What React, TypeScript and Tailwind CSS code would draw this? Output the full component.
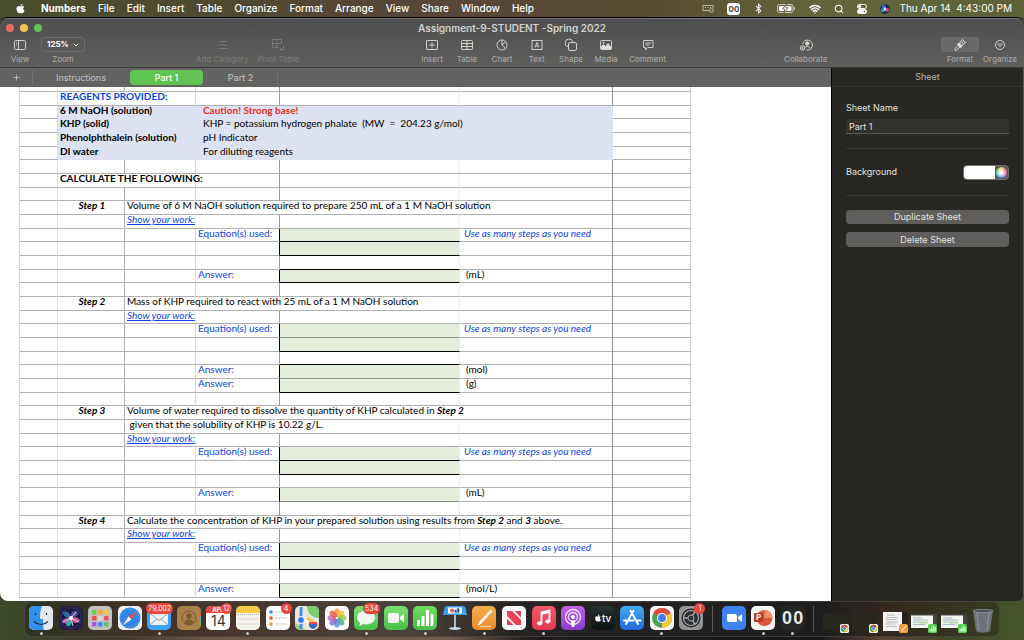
import { useState, type ReactNode } from 'react';
import { FaApple, FaBluetoothB } from 'react-icons/fa';
import { ChevronDown, Plus, Search, Wifi } from 'lucide-react';

/* ---------- Sheet data ---------- */

type Cell = {
  span?: number;
  text?: ReactNode;
  className?: string;
};

// right-hand grid line of each column
const edges = [
  'border-r-[#e0e0e0]',
  'border-r-[#b0b0b0]',
  'border-r-[#d8d8d8]',
  'border-r-[#9a9a9a]',
  'border-r-[#ececec]',
  'border-r-[#929292]',
  'border-r-[#cccccc]',
];

const green = 'bg-[#e4eddc]';
const blue = 'text-[#0b45e6]';

const blank: Cell[] = [{}, {}, {}, {}, {}, {}, {}];

const reagent = (name: string, note: string, noteClass = ''): Cell[] => [
  {},
  { span: 2, text: name, className: 'bg-[#dce2f1] border-[#dce2f1]! font-bold' },
  { span: 3, text: note, className: `bg-[#dce2f1] border-[#dce2f1]! pl-[7px]! ${noteClass}` },
  {},
];

const heading = (text: string, className = ''): Cell[] => [
  {},
  { span: 2, text, className: `font-bold ${className}` },
  {},
  {},
  {},
  {},
];

const step = (label: string, text: ReactNode, wide = true): Cell[] => [
  {},
  { text: label, className: 'text-center font-bold italic' },
  { span: wide ? 4 : 3, text },
  ...(wide ? [] : [{}]),
  {},
];

const work: Cell[] = [
  {},
  {},
  { span: 2, text: 'Show your work:', className: `italic underline ${blue}` },
  {},
  {},
  {},
];

const entry = (label: string, line: string, after = '', afterClass = 'pl-[6px]!'): Cell[] => [
  {},
  {},
  {},
  { text: label, className: `border-r-black! ${blue}` },
  { className: `${green} ${line}` },
  { text: after, className: afterClass },
  {},
];

const dark = 'border-b-black!';
const soft = 'border-b-[#8c918a]!';
const hint = 'Use as many steps as you need';
const hintClass = `pl-[4px]! italic ${blue}`;

// the blank row above a box carries its top line
const capped: Cell[] = [{}, {}, {}, {}, { className: dark }, {}, {}];

const rows: Cell[][] = [
  blank,
  heading('REAGENTS PROVIDED:', blue),
  reagent('6 M NaOH (solution)', 'Caution! Strong base!', 'font-bold text-[#ee2a24]'),
  reagent('KHP (solid)', 'KHP = potassium hydrogen phalate  (MW  =  204.23 g/mol)'),
  reagent('Phenolphthalein (solution)', 'pH Indicator'),
  reagent('DI water', 'For diluting reagents'),
  blank,
  heading('CALCULATE THE FOLLOWING:'),
  blank,
  step('Step 1', 'Volume of 6 M NaOH solution required to prepare 250 mL of a 1 M NaOH solution'),
  work,
  entry('Equation(s) used:', dark, hint, hintClass),
  entry('', dark),
  capped,
  entry('Answer:', dark, '(mL)'),
  blank,
  step('Step 2', 'Mass of KHP required to react with 25 mL of a 1 M NaOH solution', false),
  work,
  entry('Equation(s) used:', soft, hint, hintClass),
  entry('', dark),
  capped,
  entry('Answer:', soft, '(mol)'),
  entry('Answer:', dark, '(g)'),
  blank,
  step(
    'Step 3',
    <>
      Volume of water required to dissolve the quantity of KHP calculated in{' '}
      <b className="italic">Step 2</b>
    </>,
  ),
  step('', ' given that the solubility of KHP is 10.22 g/L.', false),
  work,
  entry('Equation(s) used:', dark, hint, hintClass),
  entry('', dark),
  blank,
  entry('Answer:', soft, '(mL)'),
  blank,
  step(
    'Step 4',
    <>
      Calculate the concentration of KHP in your prepared solution using results from{' '}
      <b className="italic">Step 2</b> and <b className="italic">3</b> above.
    </>,
  ),
  work,
  entry('Equation(s) used:', dark, hint, hintClass),
  entry('', dark),
  blank,
  entry('Answer:', dark, '(mol/L)'),
];

function SheetRow({ cells }: { cells: Cell[] }) {
  let col = -1;
  return (
    <tr className="h-[14px] nth-[3n]:h-[13px] first:h-[5px]">
      {cells.map((cell, i) => {
        col += cell.span ?? 1;
        return (
          <td
            key={i}
            colSpan={cell.span ?? 1}
            className={`border-r border-b border-b-[#b0b0b0] p-0 pl-[2px] align-top whitespace-pre ${edges[col]} ${cell.className ?? ''}`}
          >
            {cell.text}
          </td>
        );
      })}
    </tr>
  );
}

/* ---------- Menu bar ---------- */

const menus = ['File', 'Edit', 'Insert', 'Table', 'Organize', 'Format', 'Arrange', 'View', 'Share', 'Window', 'Help'];

function MenuBar() {
  return (
    <nav className="flex h-[17px] items-center justify-between bg-[linear-gradient(90deg,#484e2c,#4f4a30_22%,#594638_45%,#57492f_62%,#63663d_80%,#5c6138)] pr-3 pl-[15px] text-[10px] font-medium text-white">
      <div className="flex items-center gap-3">
        <FaApple className="mr-[3px] size-[11px]" />
        <button className="font-bold">Numbers</button>
        {menus.map((m) => (
          <button key={m}>{m}</button>
        ))}
      </div>
      <div className="flex items-center gap-[13px]">
        <svg viewBox="0 0 12 9" className="h-[9px] w-3" fill="none" stroke="#b8b9a6">
          <path d="M8 6.500H1v-5h10v3M3 3.500h1M5.500 3.500h1M8 3.500h1" />
          <circle cx="9.500" cy="6.500" r="1.800" />
        </svg>
        <span className="flex h-3 w-[13px] items-center justify-center rounded-[3px] bg-white text-[8px] leading-3 font-bold text-[#4a4a38]">00</span>
        <FaBluetoothB className="size-[11px]" />
        <svg viewBox="0 0 19 9" className="h-[9px] w-[19px]" fill="none">
          <rect x=".5" y=".5" width="15.500" height="8" rx="2" stroke="#cfd0c4" />
          <rect x="2" y="2" width="12.500" height="5" rx="1" fill="#fff" />
          <path d="M9.500 0 5.500 5h2.300L7 9l4-5.200H8.700z" fill="#fff" stroke="#5c5e3c" strokeWidth=".8" />
          <path d="M17.500 3v3" stroke="#cfd0c4" />
        </svg>
        <Wifi className="size-3" strokeWidth={3} />
        <Search className="size-[10px]" strokeWidth={2.5} />
        <svg viewBox="0 0 10 10" className="size-[10px]" fill="none" stroke="#fff">
          <rect x=".5" y=".5" width="9" height="4" rx="2" />
          <rect x=".5" y="5.500" width="9" height="4" rx="2" fill="#fff" />
          <circle cx="2.500" cy="2.500" r="1.200" fill="#fff" />
          <circle cx="7.500" cy="7.500" r=".8" fill="#55583a" stroke="none" />
        </svg>
        <SiriOrb className="size-[10px]" />
        <time className="-ml-1 font-normal whitespace-pre">Thu Apr 14  4:43:00 PM</time>
      </div>
    </nav>
  );
}

function SiriOrb({ className }: { className: string }) {
  return (
    <svg viewBox="0 0 24 24" className={className}>
      <circle cx="12" cy="12" r="11.500" fill="#1c2150" />
      <circle cx="9" cy="7" r="5" fill="#4b7ee8" opacity=".8" />
      <circle cx="17" cy="14" r="5" fill="#ea4f93" opacity=".8" />
      <circle cx="7" cy="15" r="5" fill="#3fb6d0" opacity=".8" />
      <path d="m12 6 4 11-4-3-4 3z" fill="#fff" />
    </svg>
  );
}

/* ---------- Toolbar ---------- */

const glyphs: Record<string, ReactNode> = {
  View: (
    <>
      <rect x="1.500" y="2.500" width="11" height="9" rx="1" />
      <path d="M5.500 2.500v9M3 5h1M3 7h1" />
    </>
  ),
  'Add Category': <path d="M2 3.500h1M5 3.500h7M2 7h1M5 7h7M2 10.500h1M5 10.500h7" />,
  'Pivot Table': (
    <>
      <path d="M8 9.500H1.500v-8h9V6M6 1.500v8M1.500 5.500h9" />
      <path d="M12.500 8v3.500H9M10.500 10 9 11.500l1.500 1.500" />
    </>
  ),
  Insert: (
    <>
      <rect x="1.500" y="2.500" width="11" height="9" rx=".5" />
      <path d="M7 4.500v5M4.500 7h5" />
    </>
  ),
  Table: (
    <>
      <rect x="1.500" y="2.500" width="11" height="9" rx="1" />
      <path d="M1.500 5.500h11M1.500 8.500h11M7 2.500v9" />
    </>
  ),
  Chart: (
    <>
      <circle cx="7" cy="7" r="5" />
      <path d="M7 2v5l3.500 3.500M7 7l3.500-3" />
    </>
  ),
  Text: (
    <>
      <rect x="2" y="2.500" width="10" height="9" />
      <path d="m5 9.500 2-5 2 5M5.800 8h2.400" />
    </>
  ),
  Shape: (
    <>
      <path d="M4.500 9A4 4 0 1 1 9 4" />
      <rect x="4.500" y="4.500" width="8" height="8" rx="1.500" />
    </>
  ),
  Media: (
    <>
      <rect x="1.500" y="2.500" width="11" height="9" rx="1" />
      <path d="M2 11V9l2.500-2.500 2 2L9 5.500 12 9v2z" fill="currentColor" />
      <circle cx="4.500" cy="4.800" r=".6" fill="currentColor" />
    </>
  ),
  Comment: (
    <>
      <path d="M2.500 2.500h9.500v7H6.500L4.500 12V9.500h-2z" />
      <path d="M4.500 5h5.500M4.500 7h4" />
    </>
  ),
  Collaborate: (
    <>
      <path d="M3.500 6a5 5 0 1 1 4 6" />
      <circle cx="8.200" cy="5.500" r="1.700" fill="currentColor" />
      <path d="M5.500 10c1-2 4.500-2 5.500 0" />
      <circle cx="3.500" cy="10" r="2.300" />
      <path d="M3.500 9v2M2.500 10h2" />
    </>
  ),
  Format: (
    <>
      <path d="m6.500 5 3-3.500 3 3L9 7.500z" />
      <path d="m8 3.300 2.700 2.700M10 3.500l.8.800M5.500 5l3.500 3.500-1.500 1L4.500 6.500z" fill="currentColor" />
      <path d="M5.200 7.200 2 10.800c-.6.900.4 2 1.300 1.300L7 9" />
    </>
  ),
  Organize: (
    <>
      <circle cx="7" cy="7" r="4.500" />
      <path d="M4.500 6h5M5.500 8h3" />
    </>
  ),
};

function Tool({ name, className, active, disabled }: { name: string; className: string; active?: boolean; disabled?: boolean }) {
  return (
    <button
      disabled={disabled}
      className={`flex flex-col items-center gap-[2px] text-[#adadab] disabled:text-[#7c7c7a] ${className}`}
    >
      <span className={`flex h-[15px] w-[38px] items-center justify-center rounded-xs ${active ? 'bg-[#696967] text-[#e4e4e2]' : ''} ${disabled ? '' : 'text-[#dcdcda]'}`}>
        <svg viewBox="0 0 14 14" className="size-[14px]" fill="none" stroke="currentColor" strokeWidth=".9">
          {glyphs[name]}
        </svg>
      </span>
      <span className="text-[8px] leading-[11px] whitespace-nowrap">{name}</span>
    </button>
  );
}

function Toolbar() {
  return (
    <header className="border-b border-[#3b3b39] bg-linear-to-b from-[#4e4e4c] to-[#5f5f5d]">
      <div className="grid h-[18px] grid-cols-[1fr_auto_1fr] items-center border-t border-[#727270]">
        <div className="flex gap-[6px] pl-[6px]">
          <button aria-label="Close" className="size-2 rounded-full bg-[#ec6a5e]" />
          <button aria-label="Minimize" className="size-2 rounded-full bg-[#f4bf4e]" />
          <button aria-label="Zoom window" className="size-2 rounded-full bg-[#61c454]" />
        </div>
        <h1 className="text-[10px] leading-3 font-semibold text-[#d2d2d0]">Assignment-9-STUDENT -Spring 2022</h1>
      </div>
      <div className="flex h-[31px] justify-between pt-px pr-1">
        <div className="flex">
          <Tool name="View" className="w-10" />
          <label className="flex w-[46px] flex-col items-center gap-[2px] text-[8px] leading-[11px] text-[#adadab]">
            <span className="relative flex h-[15px] w-11 items-center rounded-sm border border-[#6c6c6a] text-white">
              <select className="w-full appearance-none pl-[5px] text-[8px] leading-[11px] font-bold outline-none">
                <option>125%</option>
              </select>
              <ChevronDown className="pointer-events-none absolute right-1 size-2" strokeWidth={3} />
            </span>
            Zoom
          </label>
        </div>
        <div className="flex w-28">
          <Tool name="Add Category" className="w-[58px]" disabled />
          <Tool name="Pivot Table" className="w-[58px]" disabled />
        </div>
        <div className="flex">
          <Tool name="Insert" className="w-[35px]" />
          <Tool name="Table" className="w-[35px]" />
          <Tool name="Chart" className="w-[35px]" />
          <Tool name="Text" className="w-[34px]" />
          <Tool name="Shape" className="w-[35px]" />
          <Tool name="Media" className="w-[35px]" />
          <Tool name="Comment" className="w-12" />
        </div>
        <Tool name="Collaborate" className="w-[52px]" />
        <div className="flex">
          <Tool name="Format" className="w-10" active />
          <Tool name="Organize" className="w-10" />
        </div>
      </div>
    </header>
  );
}

/* ---------- Sheets ---------- */

const tabs = ['Instructions', 'Part 1', 'Part 2'];

function SheetTabs() {
  const [current, setCurrent] = useState('Part 1');
  return (
    <div className="flex h-[19px] items-center bg-[#636361] text-[9px] text-[#c4c4c2]">
      <button aria-label="New sheet" className="flex w-8 justify-center">
        <Plus className="size-[9px]" />
      </button>
      <div className="flex h-[15px] items-center gap-px border-x border-[#717170]">
        {tabs.map((tab) => (
          <button
            key={tab}
            onClick={() => setCurrent(tab)}
            className={`h-[15px] rounded-sm leading-[15px] ${tab === 'Instructions' ? 'w-24' : 'w-[73px]'} ${tab === current ? 'bg-[#62c355] font-medium text-white' : ''}`}
          >
            {tab}
          </button>
        ))}
      </div>
    </div>
  );
}

function Inspector() {
  const [name, setName] = useState('Part 1');
  return (
    <aside className="w-[193px] border-r border-l border-r-[#5a5956] border-l-black bg-[#282724] text-[9px] text-[#e3e2df]">
      <h2 className="h-[19px] border-b border-[#33322f] text-center leading-[18px] text-[#b4b3b0]">Sheet</h2>
      <div className="px-[14px] pt-[15px]">
        <label className="block">
          <span className="block leading-3">Sheet Name</span>
          <input
            value={name}
            onChange={(e) => setName(e.target.value)}
            className="mt-[5px] block h-[15px] w-full border-b border-[#5b5a57] bg-[#32312e] px-[3px] outline-none"
          />
        </label>
        <div className="mt-[14px] flex h-[48px] items-center justify-between border-y border-[#3a3936]">
          <span>Background</span>
          <button aria-label="Background colour" className="flex h-[15px] w-[46px] items-center justify-end rounded-sm border border-[#73726f] bg-[linear-gradient(90deg,#ffffff_31px,#5c5b58_31px)] pr-px">
            <span className="size-[11px] rounded-full bg-[radial-gradient(circle,#ffffff_15%,transparent_70%),conic-gradient(#f2c14e,#e2574c,#c85be0,#4d7df2,#45d3d8,#67cf5c,#f2c14e)]" />
          </button>
        </div>
        <div className="mt-[14px] flex flex-col gap-2 text-center">
          <button className="h-[14px] rounded-sm bg-[#5f5e5c] leading-[14px]">Duplicate Sheet</button>
          <button className="h-[15px] rounded-sm bg-[#5f5e5c] leading-[15px]">Delete Sheet</button>
        </div>
      </div>
    </aside>
  );
}

/* ---------- Dock ---------- */

type App = { name: string; bg: string; art?: ReactNode; running?: boolean; badge?: string };

const apps: App[] = [
  {
    name: 'Finder', bg: 'bg-[#e3e8ee]', running: true,
    art: (
      <>
        <path d="M5 0h8c-2 5-2 8-2 13h3c0 4 0 8 1 11H5a5 5 0 0 1-5-5V5a5 5 0 0 1 5-5z" fill="#3391ec" />
        <path d="M6.500 7v2M17.500 7v2M5 15.500c4 4 10 4 14 0" stroke="#1b2d44" fill="none" strokeWidth="1.200" />
      </>
    ),
  },
  {
    name: 'Siri', bg: 'bg-[#23204a]',
    art: (
      <>
        <circle cx="12" cy="12" r="10" fill="#15183a" stroke="#4a4a80" strokeWidth=".5" />
        <path d="M12 12C7 12 3 9 4 6c4-2 8 2 8 6" fill="#3f8fd0" opacity=".7" />
        <path d="M12 12c-1-5 2-9 6-7 3 3-1 7-6 7" fill="#6f6ad8" opacity=".6" />
        <path d="M12 12c5-2 9 0 9 3-4 4-8 2-9-3" fill="#e4539a" opacity=".9" />
        <path d="M12 12c2 5 0 9-4 8-3-3-1-7 4-8" fill="#41cfc0" opacity=".8" />
        <path d="M12 12c-5-1-9 1-9 4 3 3 8 1 9-4" fill="#d560b8" opacity=".7" />
        <path d="m4 16 8-4 5-6M12 12l2 8M12 12l8 4" stroke="#dfe9fb" strokeWidth=".9" fill="none" />
        <circle cx="12" cy="12" r="2" fill="#fff" />
      </>
    ),
  },
  {
    name: 'Launchpad', bg: 'bg-[#c3c1be]',
    art: (
      <>
        {['#62cf55', '#f6a63b', '#f4c443', '#e9554d', '#d9d9dc', '#e9506a', '#a455dc', '#4b8bf0', '#55c46b'].map((c, i) => (
          <rect key={c} x={4 + (i % 3) * 6} y={4 + Math.floor(i / 3) * 6} width="4.500" height="4.500" rx="1" fill={c} />
        ))}
      </>
    ),
  },
  {
    name: 'Safari', bg: 'bg-[#eeeff1]',
    art: (
      <>
        <circle cx="12" cy="12" r="10.500" fill="#3186e4" />
        <circle cx="12" cy="12" r="9" fill="none" stroke="#8fc5f7" strokeDasharray=".6 1.300" />
        <path d="m19 5-5.500 8.500-3-3z" fill="#ef4a3c" />
        <path d="m5 19 5.500-8.500 3 3z" fill="#fff" />
      </>
    ),
  },
  {
    name: 'Mail', bg: 'bg-[#3ea1f3]', running: true, badge: '79,002',
    art: (
      <>
        <rect x="3" y="7" width="18" height="12" rx="1.500" fill="#eef1f4" />
        <path d="m3.500 8 8.500 6.500L20.500 8M3.500 18.500 10 13M20.500 18.500 14 13" stroke="#9aa6b2" fill="none" />
      </>
    ),
  },
  {
    name: 'Contacts', bg: 'bg-[#a9824a]',
    art: (
      <>
        <path d="M23.500 7v3" stroke="#e05a46" strokeWidth="1.500" />
        <path d="M23.500 11v3" stroke="#4db9e6" strokeWidth="1.500" />
        <path d="M23.500 15v4" stroke="#68c35c" strokeWidth="1.500" />
        <circle cx="12" cy="12" r="7" fill="none" stroke="#7b5a2e" />
        <circle cx="12" cy="10" r="2.800" fill="#7b5a2e" />
        <path d="M7 16.500c2-4 8-4 10 0-3 3-7 3-10 0" fill="#7b5a2e" />
      </>
    ),
  },
  { name: 'Calendar', bg: 'bg-white', badge: '12' },
  {
    name: 'Notes', bg: 'bg-[#f5f3ee]', running: true,
    art: (
      <>
        <path d="M0 7V5a5 5 0 0 1 5-5h14a5 5 0 0 1 5 5v2z" fill="#f7cb45" />
        <path d="M0 8.500h24" stroke="#b3aea4" strokeDasharray="1 1" />
        <path d="M2 13h20M2 18h20" stroke="#d9d6cf" />
      </>
    ),
  },
  {
    name: 'Reminders', bg: 'bg-white', badge: '4',
    art: (
      <>
        <circle cx="5" cy="6" r="1.800" fill="#3c86ee" />
        <circle cx="5" cy="12" r="1.800" fill="#e6503f" />
        <circle cx="5" cy="18" r="1.800" fill="#ee9a3c" />
        <path d="M9 6h8M9 12h12M9 18h12" stroke="#c9c9cb" />
      </>
    ),
  },
  {
    name: 'Maps', bg: 'bg-[#e9e6da]',
    art: (
      <>
        <path d="M12 0h7a5 5 0 0 1 5 5v7C17 12 12 7 12 0z" fill="#79cf6a" />
        <path d="M5 0C5 12 12 19 24 19" stroke="#fff" strokeWidth="3" fill="none" />
        <path d="M0 17v2a5 5 0 0 0 5 5h6z" fill="#8fd67c" />
        <path d="M12 12 24 20" stroke="#f4c74a" strokeWidth="3" />
        <path d="M6 1v22" stroke="#3d8bf0" strokeWidth="3" />
        <circle cx="6" cy="14" r="3.500" fill="#2f7df0" stroke="#fff" />
        <path d="M14 16h8v3c0 3-4 4-4 4s-4-1-4-4z" fill="#3a66c4" />
        <path d="M14 16h8v2h-8z" fill="#e24a42" />
      </>
    ),
  },
  {
    name: 'Photos', bg: 'bg-[#fafafa]',
    art: (
      <>
        {['#f39b35', '#f2c63d', '#9fcb4c', '#55b58b', '#5599d8', '#7c74cc', '#c66fb2', '#e8604f'].map((c, i) => (
          <ellipse key={c} cx="12" cy="6.800" rx="2.900" ry="4.300" fill={c} opacity=".85" transform={`rotate(${i * 45} 12 12)`} />
        ))}
      </>
    ),
  },
  {
    name: 'Messages', bg: 'bg-linear-to-b from-[#7be070] to-[#48bf49]', running: true, badge: '534',
    art: <path d="M12 4.500c5 0 9 3 9 7s-4 7-9 7c-1 0-2 0-3-.4-1 1-2.500 1.900-4 1.900.8-1 1.200-2 1-3.300C4 15.400 3 13.500 3 11.500c0-4 4-7 9-7z" fill="#f2f6f1" />,
  },
  {
    name: 'FaceTime', bg: 'bg-linear-to-b from-[#7be070] to-[#48bf49]',
    art: <path d="M6 7h7a2 2 0 0 1 2 2v6a2 2 0 0 1-2 2H6a2 2 0 0 1-2-2V9a2 2 0 0 1 2-2zM16 11l4-3.500v9L16 13z" fill="#f2f6f1" />,
  },
  {
    name: 'Numbers', bg: 'bg-linear-to-b from-[#6edc5f] to-[#48bf49]', running: true,
    art: <path d="M4 14h3v6H4zM8.500 10h3v10h-3zM13 4h3v16h-3zM17.500 8h3v12h-3z" fill="#fff" />,
  },
  {
    name: 'Keynote', bg: '',
    art: (
      <>
        <path d="M2 0h20l2 9H0z" fill="#3f9fec" />
        <path d="M5 1.500h14v6H5z" fill="#f4f7fa" />
        <circle cx="9" cy="4.500" r="2" fill="#e8604f" />
        <path d="M12 6.500V4h1.500v2.500M14.500 6.500v-4H16v4" stroke="#4b8bf0" />
        <path d="M11 9h2v13h-2z" fill="#aebac6" />
        <ellipse cx="12" cy="22.500" rx="6" ry="1.400" fill="#cad8e4" />
      </>
    ),
  },
  {
    name: 'Pages', bg: 'bg-linear-to-b from-[#f5ad4a] to-[#ee8b2f]', running: true,
    art: (
      <>
        <path d="M19 3.500 7 16l-1.500 3.500L9 18 20.500 5z" fill="#fff" />
        <path d="M8 20.500h11" stroke="#fbe0bc" />
      </>
    ),
  },
  {
    name: 'News', bg: 'bg-[#fafafa]',
    art: (
      <>
        <path d="M5 5h5l9 9v5h-5L5 10z" fill="#ea3f57" />
        <path d="M5 12.500V19h6.500zM12.500 5H19v6.500z" fill="#ea3f57" />
      </>
    ),
  },
  {
    name: 'Music', bg: 'bg-linear-to-b from-[#f2576b] to-[#e63650]', running: true,
    art: (
      <>
        <path d="M9.500 17V6.500l8-2V15" fill="none" stroke="#fff" strokeWidth="1.800" />
        <path d="M9.500 7.500l8-2" stroke="#fff" strokeWidth="2.500" />
        <ellipse cx="7.800" cy="17.300" rx="2.600" ry="2.100" fill="#fff" />
        <ellipse cx="15.800" cy="15.500" rx="2.600" ry="2.100" fill="#fff" />
      </>
    ),
  },
  {
    name: 'Podcasts', bg: 'bg-linear-to-b from-[#bd63e6] to-[#8a3cc8]',
    art: (
      <>
        <circle cx="12" cy="11" r="7.500" fill="none" stroke="#f3e4fb" strokeWidth="1.300" />
        <circle cx="12" cy="11" r="4.500" fill="none" stroke="#f3e4fb" strokeWidth="1.300" />
        <circle cx="12" cy="11" r="2" fill="#fff" />
        <path d="M10 14.500h4l-.8 6.500h-2.400z" fill="#fff" />
      </>
    ),
  },
  { name: 'TV', bg: 'bg-linear-to-b from-[#273332] to-[#0d1213]' },
  {
    name: 'App Store', bg: 'bg-linear-to-b from-[#46aaf3] to-[#2467dc]',
    art: <path d="M13.500 4.500 6 18M10.500 4.500 18 18M4 14.500h9.500M17 14.500h3.500" stroke="#fff" strokeWidth="1.900" strokeLinecap="round" />,
  },
  {
    name: 'Chrome', bg: 'bg-[#f8f8f8]', running: true,
    art: (
      <>
        <circle cx="12" cy="12" r="10" fill="#4aa354" />
        <path d="M12 12 3.300 7a10 10 0 0 1 17.400 0z" fill="#dd4b3e" />
        <path d="M12 12l8.700-5A10 10 0 0 1 12 22z" fill="#f4c63f" />
        <circle cx="12" cy="12" r="5" fill="#fff" />
        <circle cx="12" cy="12" r="3.900" fill="#3d7fe8" />
      </>
    ),
  },
  {
    name: 'System Preferences', bg: 'bg-[#8f9192]', badge: '1',
    art: (
      <>
        <circle cx="12" cy="12" r="10" fill="#2f3133" stroke="#d0d2d3" strokeDasharray="1 .6" />
        <circle cx="12" cy="12" r="7.500" fill="none" stroke="#a5a8aa" strokeWidth="1.200" />
        <path d="M12 12H4.500M12 12l4-6.500M12 12l4 6.500" stroke="#a5a8aa" strokeWidth="1.500" />
        <circle cx="12" cy="12" r="3" fill="#2f3133" stroke="#a5a8aa" />
      </>
    ),
  },
];

const extras: App[] = [
  {
    name: 'zoom.us', bg: 'bg-[#3f82f3]',
    art: <path d="M6 8h7a2 2 0 0 1 2 2v6H7a2 2 0 0 1-2-2V8zM16 11l4-3v8l-4-3z" fill="#fff" />,
  },
  {
    name: 'PowerPoint', bg: 'bg-[#f7f5f4]', running: true,
    art: (
      <>
        <circle cx="13.500" cy="12" r="8" fill="#d9583a" />
        <path d="M13.500 4a8 8 0 0 1 8 8h-8z" fill="#f09071" />
        <rect x="3" y="7" width="9" height="9" rx="1" fill="#b83a20" />
      </>
    ),
  },
  { name: 'Clock', bg: 'bg-[#262626]', running: true },
];

function DockItem({ app }: { app: App }) {
  return (
    <button aria-label={app.name} className="relative flex w-6 flex-col items-center">
      <span className={`flex size-6 flex-col items-center overflow-hidden rounded-[5px] ${app.bg}`}>
        {app.art && (
          <svg viewBox="0 0 24 24" className="size-6">
            {app.art}
          </svg>
        )}
        {app.name === 'Calendar' && (
          <>
            <span className="h-[7px] w-full bg-[#e5483f] text-[6px] leading-[7px] font-bold text-white">APR</span>
            <span className="text-[14px] leading-4 text-[#333333]">14</span>
          </>
        )}
        {app.name === 'TV' && (
          <span className="flex h-6 items-center text-[10px] font-medium text-white">
            <FaApple className="size-2" />tv
          </span>
        )}
        {app.name === 'PowerPoint' && (
          <span className="absolute top-[7px] left-[5px] text-[8px] leading-[9px] font-bold text-white">P</span>
        )}
        {app.name === 'Clock' && (
          <span className="flex h-6 items-center gap-px font-['Liberation_Sans_Narrow','Liberation_Sans',sans-serif] text-[18px] leading-6 font-bold text-[#e8e8e8]">
            <span>0</span>
            <span>0</span>
          </span>
        )}
      </span>
      {app.running && <span className="mt-[2px] size-[3px] rounded-full bg-[#c9c4bf]" />}
      {app.badge && (
        <span className="absolute -top-[3px] -right-[2px] h-[11px] min-w-[11px] rounded-full bg-[#e8483c] px-[2px] text-[7px] leading-[11px] text-white">
          {app.badge}
        </span>
      )}
    </button>
  );
}

function Thumb({ name, kind, badge }: { name: string; kind: 'empty' | 'page' | 'sheet'; badge: App }) {
  return (
    <button aria-label={name} className="w-6">
      <svg viewBox="0 0 26 24" className="h-6 w-[26px]">
        {kind === 'empty' && <path d="M0 4h25v16H0z" fill="#27261f" />}
        {kind === 'page' && (
          <>
            <path d="M1 3h25v19H1z" fill="#24221f" />
            <path d="M1 3h19v19H1z" fill="#f4f4f4" />
            <path d="M5 6h8M4 8.500h12M4 10.500h11M4 13h12M4 15h9M4 17.500h11" stroke="#a4a4a4" strokeWidth=".7" />
          </>
        )}
        {kind === 'sheet' && (
          <>
            <path d="M0 5h26v14H0z" fill="#f1f4ef" />
            <path d="M0 5h26v1.500H0zM22 6h4v13h-4z" fill="#45453f" />
            <path d="M2 9h9M2 11h15M2 13h7M2 15.500h12" stroke="#8fa3b8" strokeWidth=".7" />
            <path d="M9 12.500h8v2H9z" fill="#b9d5a8" />
          </>
        )}
        <svg x="17" y="15" width="9" height="9" viewBox="0 0 24 24">
          <rect width="24" height="24" rx="5" fill={badge.name === 'Chrome' ? '#f8f8f8' : badge.name === 'Pages' ? '#f09a3a' : '#55cc4e'} />
          {badge.art}
        </svg>
      </svg>
    </button>
  );
}

function Dock() {
  const find = (name: string) => apps.find((a) => a.name === name)!;
  return (
    <footer className="mx-6 flex h-9 justify-between rounded-lg border border-[#55504a]/60 bg-[linear-gradient(90deg,#2f3320,#46322b_16%,#4a3a33_28%,#4a423c_40%,#262423_50%,#1f1e1e_82%,#33271f_88%,#363c20)] px-1 pt-1">
      {apps.map((app) => (
        <DockItem key={app.name} app={app} />
      ))}
      <span className="mx-[3px] h-[26px] w-px bg-[#5b5856]" />
      {extras.map((app) => (
        <DockItem key={app.name} app={app} />
      ))}
      <span className="mx-[3px] h-[26px] w-px bg-[#5b5856]" />
      <Thumb name="Chrome window" kind="empty" badge={find('Chrome')} />
      <Thumb name="Second Chrome window" kind="empty" badge={find('Chrome')} />
      <Thumb name="Pages document" kind="page" badge={find('Pages')} />
      <Thumb name="Numbers document" kind="sheet" badge={find('Numbers')} />
      <Thumb name="Second Numbers document" kind="sheet" badge={find('Numbers')} />
      <button aria-label="Trash" className="w-6">
        <svg viewBox="0 0 24 24" className="size-6">
          <path d="M2 1h20l-3 21c-3 2-11 2-14 0z" fill="#6c7379" />
          <path d="M6 4l2 17M18 4l-2 17" stroke="#8a9197" strokeWidth="1.200" />
          <ellipse cx="12" cy="2" rx="10" ry="1.600" fill="#4a5054" stroke="#8f969b" strokeWidth=".8" />
        </svg>
      </button>
    </footer>
  );
}

export default function App() {
  return (
    <div className="min-h-screen bg-[linear-gradient(90deg,#3b4a28,#40392b_12%,#6b5548_20%,#6f5b4e_44%,#1d1b1b_52%,#191818_80%,#5a4237_86%,#3f4a26_93%,#46542d)] font-['Inter',sans-serif]">
      <MenuBar />
      <div className="overflow-hidden rounded-lg border-t border-black">
        <Toolbar />
        <div className="flex">
          <main className="min-w-0 flex-1 bg-white pb-[3px]">
            <SheetTabs />
            <table className="ml-[19px] w-[672px] table-fixed border-separate border-spacing-0 border-l border-l-[#d0d0d0] font-['Lato',sans-serif] text-[10px] leading-[9px] text-black">
              <colgroup>
                <col className="w-[38px]" />
                <col className="w-[67px]" />
                <col className="w-[71px]" />
                <col className="w-[84px]" />
                <col className="w-[180px]" />
                <col className="w-[153px]" />
                <col className="w-[78px]" />
              </colgroup>
              <tbody>
                {rows.map((cells, i) => (
                  <SheetRow key={i} cells={cells} />
                ))}
              </tbody>
            </table>
          </main>
          <Inspector />
        </div>
      </div>
      <Dock />
    </div>
  );
}
